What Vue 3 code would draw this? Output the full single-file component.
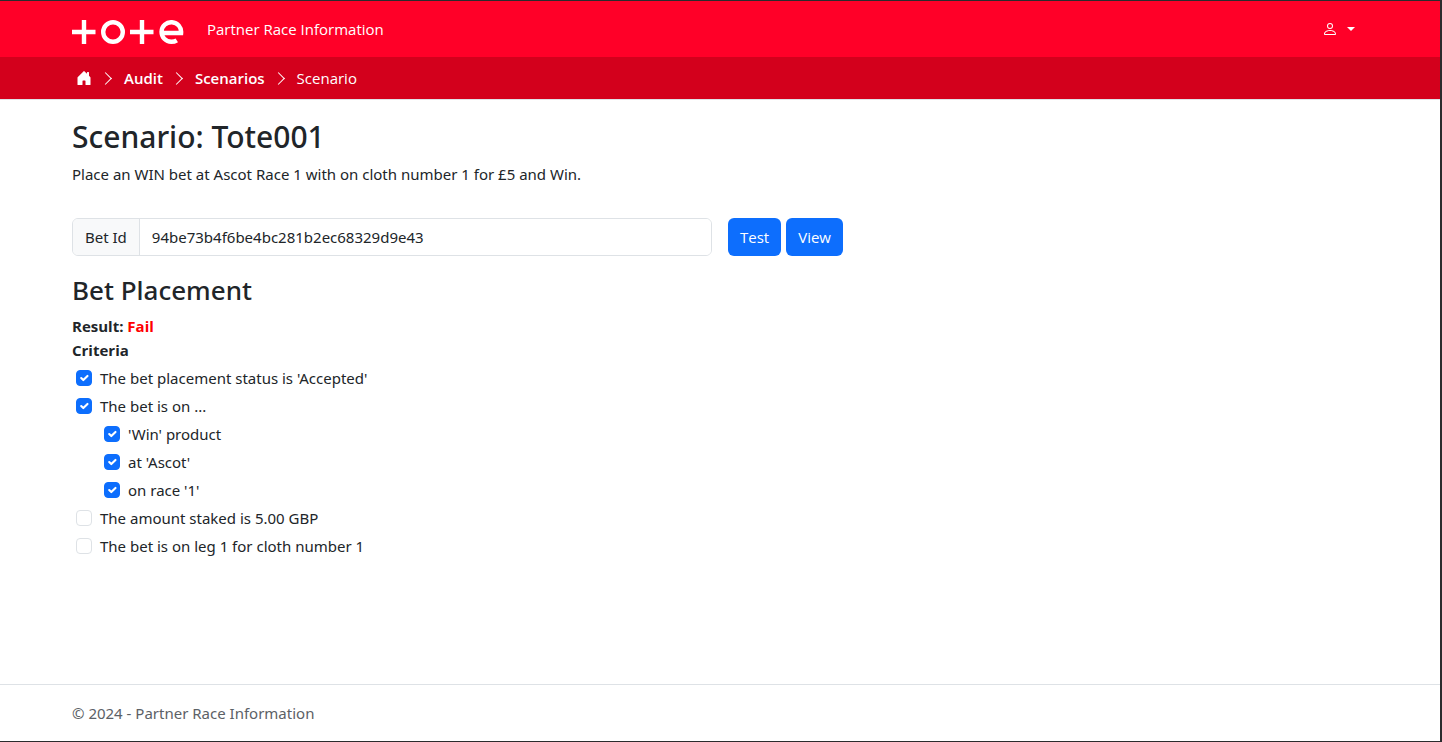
<script setup>
import { ref, reactive } from 'vue'

const betId = ref('94be73b4f6be4bc281b2ec68329d9e43')

const criteria = reactive([
  { id: 'c1', text: "The bet placement status is 'Accepted'", met: true },
  {
    id: 'c2',
    text: 'The bet is on ...',
    met: true,
    children: [
      { id: 'c2a', text: "'Win' product", met: true },
      { id: 'c2b', text: "at 'Ascot'", met: true },
      { id: 'c2c', text: "on race '1'", met: true }
    ]
  },
  { id: 'c3', text: 'The amount staked is 5.00 GBP', met: false },
  { id: 'c4', text: 'The bet is on leg 1 for cloth number 1', met: false }
])
</script>

<template>
  <div class="page">
    <header>
      <nav class="navbar" aria-label="Main">
        <div class="container navbar-row">
          <a class="logo" href="#" aria-label="tote">
            <svg width="112" height="24" viewBox="0 0 112 24" fill="none" stroke="#fff" stroke-width="4.400">
              <path d="M12 0v24M0 12h23.500" />
              <circle cx="41" cy="12" r="9.800" />
              <path d="M70 0v24M58 12h23.500" />
              <path d="M88.500 13h20.600A9.800 9.800 0 1 0 99.300 21.800Q102.500 21.800 104.800 20.300" />
            </svg>
          </a>
          <a class="brand" href="#">Partner Race Information</a>
          <button class="user" type="button" aria-label="Account menu">
            <svg width="16" height="16" viewBox="0 0 16 16" fill="#fff">
              <path d="M8 8a3 3 0 1 0 0-6 3 3 0 0 0 0 6m2-3a2 2 0 1 1-4 0 2 2 0 0 1 4 0m4 8c0 1-1 1-1 1H3s-1 0-1-1 1-4 6-4 6 3 6 4m-1-.004c-.001-.246-.154-.986-.832-1.664C11.516 10.680 10.289 10 8 10s-3.516.680-4.168 1.332c-.678.678-.830 1.418-.832 1.664z" />
            </svg>
            <span class="caret"></span>
          </button>
        </div>
      </nav>
      <nav class="crumbs" aria-label="Breadcrumb">
        <div class="container">
          <ol>
            <li>
              <a class="home" href="#" aria-label="Home">
                <svg width="16" height="16" viewBox="0 0 16 16" fill="#fff">
                  <path d="M6.500 14.500v-3.505c0-.245.250-.495.500-.495h2c.250 0 .500.250.500.500v3.500a.5.5 0 0 0 .5.5h4a.5.5 0 0 0 .5-.5v-7a.5.5 0 0 0-.146-.354L13 5.793V2.500a.5.5 0 0 0-.5-.5h-1a.5.5 0 0 0-.5.5v1.293L8.354 1.146a.5.5 0 0 0-.708 0l-6 6A.5.5 0 0 0 1.500 7.500v7a.5.5 0 0 0 .5.5h4a.5.5 0 0 0 .5-.5" />
                </svg>
              </a>
            </li>
            <li><a href="#">Audit</a></li>
            <li><a href="#">Scenarios</a></li>
            <li aria-current="page">Scenario</li>
          </ol>
        </div>
      </nav>
    </header>

    <main>
      <div class="container">
        <h1>Scenario: Tote001</h1>
        <p class="lead">Place an WIN bet at Ascot Race 1 with on cloth number 1 for £5 and Win.</p>

        <form class="bet-form" @submit.prevent>
          <div class="input-group">
            <label for="bet-id">Bet Id</label>
            <input id="bet-id" v-model="betId" type="text" />
          </div>
          <div class="actions">
            <button type="submit">Test</button>
            <button type="button">View</button>
          </div>
        </form>

        <h2>Bet Placement</h2>
        <p class="strong">Result: <span class="fail">Fail</span></p>
        <p class="strong">Criteria</p>
        <ul class="criteria">
          <li v-for="item in criteria" :key="item.id">
            <div class="check">
              <input :id="item.id" v-model="item.met" type="checkbox" />
              <label :for="item.id">{{ item.text }}</label>
            </div>
            <ul v-if="item.children" class="nested">
              <li v-for="child in item.children" :key="child.id">
                <div class="check">
                  <input :id="child.id" v-model="child.met" type="checkbox" />
                  <label :for="child.id">{{ child.text }}</label>
                </div>
              </li>
            </ul>
          </li>
        </ul>
      </div>
    </main>

    <footer>
      <div class="container">© 2024 - Partner Race Information</div>
    </footer>
  </div>
</template>

<style>
body {
  background: #fff;
}
</style>

<style scoped>
.page,
.page * {
  box-sizing: border-box;
}

.page {
  display: flex;
  flex-direction: column;
  min-height: 100vh;
  border: solid #2b2b2d;
  border-width: 1px 2px 1px 0;
  font-family: "Noto Sans", "Open Sans", sans-serif;
  font-size: 15px;
  line-height: 24px;
  color: #212529;
}

.container {
  width: 100%;
  max-width: 1320px;
  margin: 0 auto;
  padding: 0 12px;
}

a {
  color: #fff;
  text-decoration: none;
}

button,
input {
  font: inherit;
}

header,
.actions button,
.strong {
  font-family: "Open Sans", "Noto Sans", sans-serif;
}

.navbar {
  background: #ff0028;
}

.navbar-row {
  display: flex;
  align-items: center;
  height: 56px;
}

.logo {
  display: flex;
  padding-top: 6px;
  margin-right: 23px;
}

.user {
  display: flex;
  align-items: center;
  gap: 9px;
  margin-left: auto;
  padding: 8px 13px;
  border: 0;
  background: none;
}

.caret {
  border: 4px solid transparent;
  border-top-color: #fff;
  border-bottom: 0;
}

.crumbs {
  background: #d3001c;
  border-bottom: 1px solid #dee2e6;
  color: #fff;
}

.crumbs ol {
  display: flex;
  align-items: center;
  height: 42px;
  margin: 0;
  padding: 0 4px;
  list-style: none;
}

.crumbs li {
  display: flex;
  align-items: center;
}

.crumbs li + li::before {
  content: "";
  width: 8px;
  height: 8px;
  margin: 0 14px 0 9px;
  border: solid #fff;
  border-width: 1px 1px 0 0;
  transform: rotate(45deg);
}

.crumbs a {
  font-weight: 600;
}

.home {
  display: flex;
}

main {
  flex: 1;
  padding-top: 18px;
}

h1,
h2,
p {
  margin: 0;
}

h1,
h2 {
  margin-bottom: 6px;
  font-weight: 500;
}

h1 {
  font-size: 30px;
  line-height: 38px;
}

h2 {
  font-size: 26px;
  line-height: 36px;
}

.bet-form {
  display: grid;
  grid-template-columns: 1fr 1fr;
  gap: 16px;
  margin: 32px 0 16px;
}

.input-group {
  display: flex;
  height: 38px;
  border: 1px solid #dee2e6;
  border-radius: 6px;
  overflow: hidden;
}

.input-group label {
  padding: 6px 12px;
  background: #f8f9fa;
  border-right: 1px solid #dee2e6;
}

.input-group input {
  flex: 1;
  min-width: 0;
  padding: 6px 12px;
  border: 0;
  color: inherit;
  background: #fff;
}

.actions {
  display: flex;
  gap: 5px;
}

.actions button {
  padding: 6px 12px;
  border: 0;
  border-radius: 6px;
  background: #0d6efd;
  color: #fff;
}

.strong {
  font-weight: 700;
}

.fail {
  color: #f00;
}

.criteria,
.nested {
  margin: 0;
  padding: 0;
  list-style: none;
}

.criteria {
  padding: 2px 4px;
}

.nested {
  padding-left: 28px;
}

.check {
  display: flex;
  align-items: center;
  gap: 8px;
  height: 28px;
}

.check input {
  appearance: none;
  width: 16px;
  height: 16px;
  margin: 0;
  border: 1px solid #dee2e6;
  border-radius: 4px;
  background: #fff;
}

.check input:checked {
  border-color: #0d6efd;
  background: #0d6efd url("data:image/svg+xml,%3csvg xmlns='http://www.w3.org/2000/svg' viewBox='0 0 20 20'%3e%3cpath fill='none' stroke='%23fff' stroke-linecap='round' stroke-linejoin='round' stroke-width='3' d='m6 10 3 3 6-6'/%3e%3c/svg%3e") center / contain no-repeat;
}

footer {
  padding: 16px 0;
  border-top: 1px solid #dee2e6;
  color: #5c6166;
}
</style>
